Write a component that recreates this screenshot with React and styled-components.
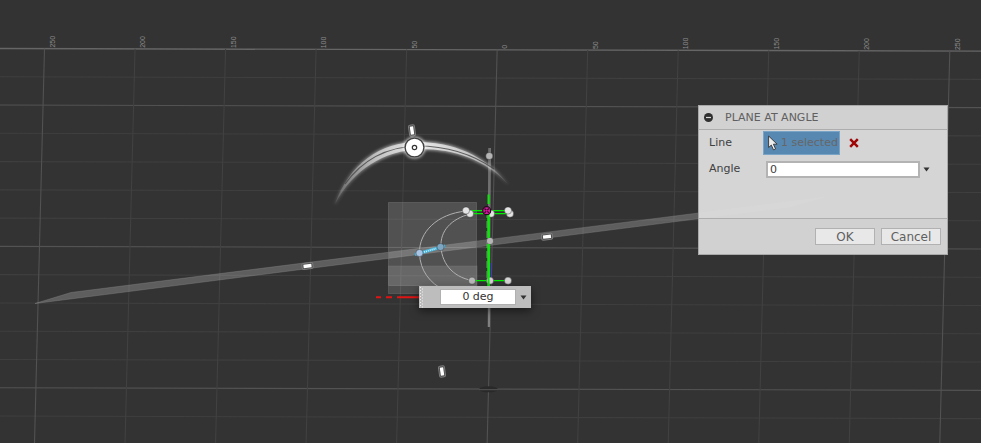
import React from 'react'
import styled, { createGlobalStyle } from 'styled-components'

const GlobalStyle = createGlobalStyle`
  * {
    box-sizing: border-box;
  }

  body {
    margin: 0;
    background: #333333;
    font-family: "DejaVu Sans", "Noto Sans", sans-serif;
    font-size: 11px;
    line-height: 16px;
    color: #404040;
  }
`

const Workspace = styled.main`
  position: relative;
  min-height: 100vh;
  overflow: hidden;
`

const Viewport = styled.svg`
  display: block;
  width: 100%;
  height: 100vh;
`

const Label = styled.text`
  font-family: "Liberation Sans Narrow", "Liberation Sans", sans-serif;
  font-size: 7px;
  fill: #8c8c8c;
`

const Dialog = styled.form`
  position: absolute;
  top: 105px;
  right: 33px;
  width: 250px;
  background: rgba(220, 220, 220, 0.96);
  border: 1px solid #a9a9a9;
`

const DialogHeader = styled.header`
  display: flex;
  align-items: center;
  gap: 12px;
  height: 24px;
  padding: 0 5px;
  background: #d1d1d1;
  border-bottom: 1px solid #adadad;
`

const Title = styled.h1`
  margin: 0;
  font-size: 11px;
  font-weight: 400;
  color: #606060;
`

const CollapseButton = styled.button`
  display: flex;
  padding: 0;
  border: 0;
  background: none;
`

const Fields = styled.div`
  display: flex;
  flex-direction: column;
  gap: 2px;
  height: 88px;
  padding-top: 1px;
`

const Field = styled.div`
  display: grid;
  grid-template-columns: 54px 1fr;
  align-items: center;
  height: 24px;
  padding-left: 10px;
`

const Control = styled.div`
  display: flex;
  align-items: center;
  gap: ${(props) => props.$gap || 0}px;
  padding-left: ${(props) => props.$indent || 0}px;
`

const SelectButton = styled.button`
  display: flex;
  align-items: center;
  gap: 3px;
  height: 24px;
  padding: 0 1px 0 4px;
  background: #5788b2;
  border: 1px solid #79a3c7;
  font: inherit;
  color: #666666;
`

const IconButton = styled.button`
  display: flex;
  align-items: center;
  justify-content: center;
  padding: 0;
  width: ${(props) => props.$width || 12}px;
  height: 16px;
  border: 0;
  background: none;
`

const TextInput = styled.input`
  width: 154px;
  height: 17px;
  padding: 0 2px;
  border: 2px solid #b3b3b3;
  border-radius: 0;
  outline: 0;
  background: #ffffff;
  font: inherit;
  color: #404040;
`

const Footer = styled.footer`
  display: flex;
  align-items: center;
  justify-content: flex-end;
  gap: 6px;
  height: 36px;
  padding: 0 6px;
  border-top: 1px solid #adadad;
  background: #d1d1d1;
`

const DialogButton = styled.button`
  width: 60px;
  height: 17px;
  padding: 0;
  border: 1px solid #b1b1b1;
  background: #e8e8e8;
  font: inherit;
  font-size: 12px;
  line-height: 14px;
  color: #606060;
`

const AngleBox = styled.div`
  position: absolute;
  top: 286px;
  left: 419px;
  display: flex;
  align-items: center;
  width: 112px;
  height: 22px;
  background: #bdbdbd;
  box-shadow: 0 3px 8px rgba(0, 0, 0, 0.5);
`

const Grip = styled.svg`
  width: 5px;
  height: 22px;
  margin-right: 16px;
`

const AngleInput = styled.input`
  width: 76px;
  height: 16px;
  padding: 0;
  border: 1px solid #b0b0b0;
  outline: 0;
  background: #ffffff;
  font: inherit;
  text-align: center;
  color: #333333;
`

const labels = ['250', '200', '150', '100', '50', '0', '50', '100', '150', '200', '250']
const rows = Array.from({ length: 14 }, (_, i) => i)
const grips = [1, 4, 7, 10, 13, 16, 19]

// The grid leans a little: every column moves left and every row moves down.
function Grid() {
  return (
    <g fill="none">
      {rows.map((row) => {
        const y = 48.5 + row * 28.27
        const major = row === 0 || row % 5 === 2
        return (
          <line
            key={row}
            x1="0"
            y1={y}
            x2="981"
            y2={y + 2.6}
            stroke={row === 0 ? '#666666' : major ? '#535353' : '#3f3f3f'}
            strokeWidth={row === 0 ? 1.4 : 1.1}
          />
        )
      })}
      {labels.map((label, i) => {
        const x = 44.5 + i * 90.53
        const y = 48.6 + i * 0.25
        return (
          <g key={i}>
            <line x1={x} y1={y} x2={x - 10} y2="443" stroke={i % 5 === 0 ? '#525252' : '#414141'} strokeWidth="1.1" />
            <Label transform={`translate(${x + 10} ${y - 1}) rotate(-90)`}>{label}</Label>
          </g>
        )
      })}
    </g>
  )
}

function Handle({ x, y, angle }) {
  return (
    <g transform={`translate(${x} ${y}) rotate(${angle})`}>
      <rect x="-3.5" y="-6" width="7" height="12" rx="2" fill="#7b7b7b" />
      <rect x="-2.5" y="-5" width="5" height="10" rx="1" fill="#4a4a4a" />
      <rect x="-1.7" y="-4" width="3.4" height="8" fill="#ffffff" />
    </g>
  )
}

function Dot({ x, y, fill = '#e4e4e4' }) {
  return <circle cx={x} cy={y} r="3.6" fill={fill} stroke="#222222" strokeOpacity="0.5" strokeWidth="0.8" />
}

function Sketch() {
  return (
    <g fill="none">
      <ellipse cx="488.5" cy="389.3" rx="9.5" ry="3" fill="#292929" />
      <path d="M479 389.7h19" stroke="#555555" />

      <path d="M35 303.5L71 292.5L825 197L790 207Z" fill="#ffffff" fillOpacity="0.21" stroke="#888888" strokeOpacity="0.5" strokeWidth="0.8" />

      <rect x="388.5" y="202.5" width="88" height="83" fill="#ffffff" fillOpacity="0.15" stroke="#777777" strokeOpacity="0.45" />
      <rect x="388.5" y="266" width="88.5" height="27.5" fill="#ffffff" fillOpacity="0.13" stroke="#777777" strokeOpacity="0.4" />

      <path d="M489 148L488.3 327M490.2 148L489.3 327" stroke="#8f8f8f" strokeWidth="1" />
      <path d="M487 211V282" stroke="#8b8b8b" strokeDasharray="7 3" />

      <g stroke="#b0b0b0" strokeWidth="1">
        <path d="M466 211C437 214 419 232 419.5 253C420 271 430 283 444 290" />
        <path d="M470 214C451 219 440 231 441 247C442 265 455 279 476 281" />
      </g>

      <g stroke="#00f000" strokeWidth="1.2">
        <path d="M466 210.7H508M471 213.7H510M472 280.7H508" />
        <path d="M488.5 194.5V204M488.5 212V286" strokeWidth="2" />
      </g>
      <path d="M490.8 263V278" stroke="#3333a8" strokeWidth="1.3" />

      <Dot x={470} y={213.7} />
      <Dot x={510} y={213.7} />
      <Dot x={491} y={213.7} />
      <Dot x={466} y={210.5} />
      <Dot x={508} y={210.5} />
      <Dot x={472} y={280.7} fill="#b9b9b9" />
      <Dot x={490} y={280.7} fill="#e0c8dd" />
      <Dot x={508} y={280.7} fill="#d5d5d5" />
      <Dot x={490} y={241} fill="#b5b5b5" />
      <Dot x={489.3} y={156} fill="#b5b5b5" />
      <path d="M488.5 214V238M488.5 244V286" stroke="#00f000" strokeWidth="2" />

      <circle cx="486.7" cy="210.7" r="4" fill="#d514a0" stroke="#1c1018" strokeWidth="1.2" />
      <path d="M484.5 208.5l4.4 4.4M488.9 208.5l-4.4 4.4" stroke="#30051f" strokeWidth="1.2" />
      <circle cx="486.7" cy="210.7" r="1" fill="#d514a0" />

      <path d="M415 254.5L445 246" stroke="#46b7df" strokeWidth="3" />
      <path d="M424 252L436 248.5" stroke="#d3f3ff" strokeWidth="1.5" strokeDasharray="1 1" />
      <Dot x={419.5} y={253} fill="#a9c5e5" />
      <Dot x={440.5} y={247} fill="#7da6c2" />

      <path d="M376 297.3h5M386 297.3h6M397 297.3h24" stroke="#e01414" strokeWidth="2" />
    </g>
  )
}

function Manipulator() {
  const crescent = 'M335 204C350 163 381 141 421 142C461 143 490 161 508 184C485 160 455 149 421 149C383 151 354 169 335 204Z'

  return (
    <g>
      <defs>
        <linearGradient id="arc" x1="335" x2="508" y1="0" y2="0" gradientUnits="userSpaceOnUse">
          <stop offset="0" stopColor="#ffffff" stopOpacity="0.15" />
          <stop offset="0.25" stopColor="#ffffff" stopOpacity="0.7" />
          <stop offset="0.5" stopColor="#ffffff" />
          <stop offset="0.8" stopColor="#ffffff" stopOpacity="0.7" />
          <stop offset="1" stopColor="#ffffff" stopOpacity="0.1" />
        </linearGradient>
        <filter id="glow" x="-20%" y="-40%" width="140%" height="180%">
          <feGaussianBlur stdDeviation="1.5" />
        </filter>
        <filter id="soft">
          <feGaussianBlur stdDeviation="0.7" />
        </filter>
      </defs>
      <path d={crescent} fill="url(#arc)" stroke="url(#arc)" strokeWidth="2" filter="url(#glow)" opacity="0.6" />
      <path d={crescent} fill="url(#arc)" fillOpacity="0.7" filter="url(#soft)" />
      <path d="M345 184C361 162 384 147 417 146C450 146 474 155 494 169" fill="none" stroke="#444444" strokeWidth="1.1" opacity="0.8" />
      <Handle x={412} y={130.5} angle={-8} />
      <circle cx="414.5" cy="147.5" r="11" fill="#ffffff" opacity="0.65" filter="url(#glow)" />
      <circle cx="414.5" cy="147.5" r="9.4" fill="#ffffff" stroke="#404040" strokeWidth="1.4" />
      <circle cx="414.5" cy="147.5" r="2.2" fill="#ffffff" stroke="#333333" strokeWidth="1.2" />
    </g>
  )
}

function Canvas() {
  return (
    <Viewport viewBox="0 0 981 443" preserveAspectRatio="xMinYMin slice" aria-hidden="true">
      <Grid />
      <Sketch />
      <Handle x={307.5} y={266} angle={83} />
      <Handle x={547} y={236.7} angle={83} />
      <Handle x={442} y={371.5} angle={-8} />
      <Manipulator />
    </Viewport>
  )
}

function Arrow() {
  return (
    <svg width="7" height="5" viewBox="0 0 7 5" aria-hidden="true">
      <path d="M0.5 0.5h6L3.5 4.5Z" fill="#333333" />
    </svg>
  )
}

function PlaneDialog() {
  return (
    <Dialog onSubmit={(e) => e.preventDefault()}>
      <DialogHeader>
        <CollapseButton type="button" aria-label="Collapse">
          <svg width="9" height="9" viewBox="0 0 9 9" aria-hidden="true">
            <circle cx="4.5" cy="4.5" r="4.5" fill="#303030" />
            <path d="M2 4.5h5" stroke="#dddddd" strokeWidth="1.2" />
          </svg>
        </CollapseButton>
        <Title>PLANE AT ANGLE</Title>
      </DialogHeader>
      <Fields>
        <Field>
          <label htmlFor="line">Line</label>
          <Control $gap={8}>
            <SelectButton id="line" type="button">
              <svg width="10" height="16" viewBox="0 0 10 16" aria-hidden="true">
                <path d="M0.6 1v11.5l2.7-2.4 2.2 4.8 2.1-1-2.2-4.7h3.7Z" fill="#eeeeee" stroke="#333333" strokeWidth="0.9" />
              </svg>
              1 selected
            </SelectButton>
            <IconButton type="button" aria-label="Clear selection">
              <svg width="10" height="10" viewBox="0 0 10 10" aria-hidden="true">
                <path d="M1.2 1.2l7.6 7.6M8.8 1.2L1.2 8.8" stroke="#a00505" strokeWidth="2.5" />
              </svg>
            </IconButton>
          </Control>
        </Field>
        <Field>
          <label htmlFor="angle">Angle</label>
          <Control $indent={3}>
            <TextInput id="angle" defaultValue="0" />
            <IconButton type="button" aria-label="Angle options">
              <Arrow />
            </IconButton>
          </Control>
        </Field>
      </Fields>
      <Footer>
        <DialogButton type="submit">OK</DialogButton>
        <DialogButton type="button">Cancel</DialogButton>
      </Footer>
    </Dialog>
  )
}

function App() {
  return (
    <Workspace>
      <GlobalStyle />
      <Canvas />
      <AngleBox>
        <Grip aria-hidden="true">
          {grips.map((y) => (
            <path key={y} d={`M1 ${y + 0.5}h1M3 ${y + 2}h1`} stroke="#eeeeee" />
          ))}
        </Grip>
        <AngleInput aria-label="Angle value" defaultValue="0 deg" />
        <IconButton type="button" aria-label="Angle value options" $width={15}>
          <Arrow />
        </IconButton>
      </AngleBox>
      <PlaneDialog />
    </Workspace>
  )
}

export default App
